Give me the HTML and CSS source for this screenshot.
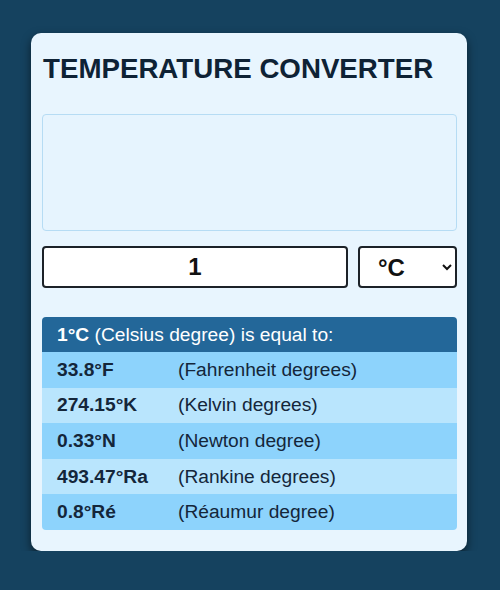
FILE: index.html
```html
<!DOCTYPE html>
<html lang="en">
<head>
  <meta charset="UTF-8" />
  <meta name="viewport" content="width=device-width, initial-scale=1.0"/>
  <title>Temperature Converter</title>
  <link rel="stylesheet" href="styles.css">
</head>
<body>
  <div class="converter">
    <h1>TEMPERATURE CONVERTER</h1>

    <!-- info / notes box -->
    <div class="info-box"></div>

    <div class="input-row">
      <input id="tempValue" class="temp-input" type="text" value="1">
      <select id="tempUnit" class="unit-select">
        <option value="C" selected>°C</option>
        <option value="F">°F</option>
        <option value="K">°K</option>
        <option value="N">°N</option>
        <option value="Ra">°Ra</option>
        <option value="Re">°Ré</option>
      </select>
    </div>

    <table class="results">
      <thead>
        <tr><th colspan="2"><strong>1°C</strong> (Celsius degree) is equal to:</th></tr>
      </thead>
      <tbody>
        <tr><td class="value">33.8°F</td><td>(Fahrenheit degrees)</td></tr>
        <tr><td class="value">274.15°K</td><td>(Kelvin degrees)</td></tr>
        <tr><td class="value">0.33°N</td><td>(Newton degree)</td></tr>
        <tr><td class="value">493.47°Ra</td><td>(Rankine degrees)</td></tr>
        <tr><td class="value">0.8°Ré</td><td>(Réaumur degree)</td></tr>
      </tbody>
    </table>
  </div>
</body>
</html>
```

FILE: styles.css
```css
:root {
  --page-bg: #15425f;
  --card-bg: #e8f5fe;
  --head-bg: #236799;
  --row-a: #8dd3fc;
  --row-b: #b9e5fd;
  --text: #14263a;
}

* { box-sizing: border-box; margin: 0; padding: 0; font-family: 'Liberation Sans', Arial, sans-serif; }
body {
  background-color: var(--page-bg);
  color: var(--text);
  padding: 33px 0 0 31px;
}
.converter {
  width: 436px;
  background-color: var(--card-bg);
  border-radius: 10px;
  box-shadow: 0 4px 10px rgba(0, 0, 0, 0.55);
  padding: 20px 10px 21px 11px;
}
h1 {
  font-size: 27.7px;
  font-weight: 700;
  color: #0e2235;
  line-height: 31px;
  margin-left: 1px;
  margin-bottom: 30px;
}
.info-box {
  height: 117px;
  border: 1px solid #b6dcf4;
  border-radius: 4px;
  background-color: #e6f4fe;
  margin-bottom: 15px;
}
.input-row {
  display: flex;
  gap: 10px;
  margin-bottom: 29px;
}
.temp-input, .unit-select {
  height: 42px;
  border: 2px solid #1c2228;
  border-radius: 4px;
  background-color: white;
  font-size: 24px;
  font-weight: 700;
  color: #111;
}
.temp-input {
  width: 306px;
  text-align: center;
}
.unit-select {
  width: 99px;
  padding-left: 14px;
}
.temp-input:focus, .unit-select:focus { outline: none; }

.results {
  width: 100%;
  border-collapse: collapse;
  font-size: 19.2px;
  border-radius: 4px;
  overflow: hidden;
}
.results th {
  background-color: var(--head-bg);
  color: white;
  font-weight: 400;
  text-align: left;
  height: 35px;
  padding: 0 15px;
}
.results td {
  height: 35.6px;
  padding: 0;
}
.results td.value {
  width: 136px;
  padding-left: 15px;
  font-weight: 700;
}
.results tbody tr:nth-child(odd) { background-color: var(--row-a); }
.results tbody tr:nth-child(even) { background-color: var(--row-b); }
```
